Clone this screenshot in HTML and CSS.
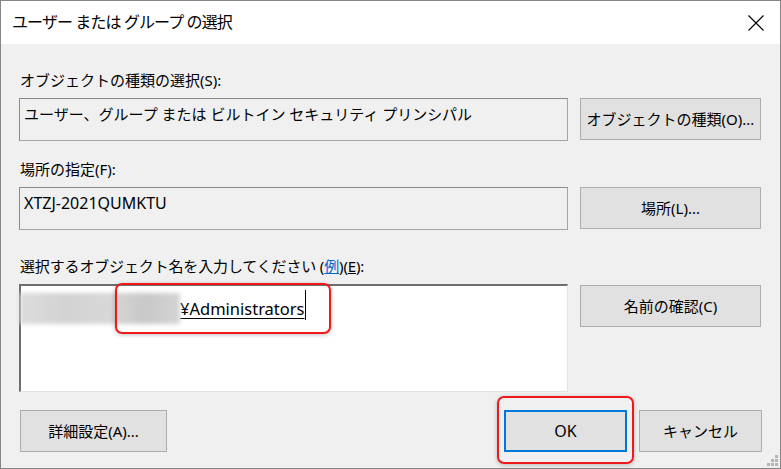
FILE: index.html
```html
<!DOCTYPE html>
<html lang="ja">
<head>
<meta charset="utf-8">
<title>ユーザー または グループ の選択</title>
<link rel="stylesheet" href="styles.css">
</head>
<body>
<div class="window">
  <div class="titlebar">
    <span class="title">ユーザー または グループ の選択</span>
    <span class="close">
      <svg width="16" height="16" viewBox="0 0 16 16"><path d="M0.5 0.5 L15.5 15.5 M15.5 0.5 L0.5 15.5" stroke="#000" stroke-width="1.1" fill="none"/></svg>
    </span>
  </div>
  <div class="content">
    <div class="label l1">オブジェクトの種類の選択(S):</div>
    <div class="row">
      <div class="field">ユーザー、グループ または ビルトイン セキュリティ プリンシパル</div>
      <div class="btn">オブジェクトの種類(O)...</div>
    </div>
    <div class="label l2">場所の指定(F):</div>
    <div class="row">
      <div class="field latin">XTZJ-2021QUMKTU</div>
      <div class="btn">場所(L)...</div>
    </div>
    <div class="label l3">選択するオブジェクト名を入力してください (<span class="link">例</span>)(<u>E</u>):</div>
    <div class="row row-top">
      <div class="textarea">
        <div class="line"><span class="redact"></span><span class="entry">¥Administrators</span><span class="caret"></span></div>
        <div class="mark mark-name"></div>
      </div>
      <div class="btn btn-short">名前の確認(C)</div>
    </div>
    <div class="bottom">
      <div class="btn btn-adv">詳細設定(A)...</div>
      <div class="actions">
        <div class="ok-wrap">
          <div class="btn btn-ok">OK</div>
          <div class="mark mark-ok"></div>
        </div>
        <div class="btn btn-cancel">キャンセル</div>
      </div>
    </div>
  </div>
  <div class="grip">
    <i></i><i></i><i></i><i></i><i></i><i></i>
  </div>
</div>
</body>
</html>
```
FILE: styles.css
```css
* { box-sizing: border-box; }
html, body { margin: 0; padding: 0; }
body {
  font-family: "Noto Sans", "Noto Sans CJK JP", sans-serif;
  font-size: 15px;
  color: #000;
  background: #f0f0f0;
}
.window {
  position: relative;
  width: 781px;
  height: 469px;
  border: 1px solid #858585;
  background: #f0f0f0;
  display: flex;
  flex-direction: column;
}
.titlebar {
  height: 43px;
  background: #fff;
  display: flex;
  align-items: center;
  justify-content: space-between;
  padding: 0 16px 0 11px;
}
.title {
  font-size: 16px;
  letter-spacing: -0.9px;
  line-height: 20px;
  padding-bottom: 1px;
}
.close {
  display: flex;
  width: 16px;
  height: 16px;
}
.content {
  display: flex;
  flex-direction: column;
  padding: 0 18px;
}
.label {
  height: 20px;
  line-height: 20px;
  padding-left: 1px;
  white-space: nowrap;
}
.l1 { margin-top: 26px; }
.l2 { margin-top: 18px; }
.l3 { margin-top: 26px; letter-spacing: -0.15px; }
.link { color: #0066cc; text-decoration: underline; }
.row {
  display: flex;
  gap: 12px;
  margin-top: 8px;
  align-items: flex-start;
}
.field {
  width: 549px;
  height: 43px;
  border: 1px solid #8a8a8a;
  border-right-color: #a5a5a5;
  border-bottom-color: #a5a5a5;
  padding: 4px 4px;
  line-height: 22px;
  white-space: nowrap;
}
.field.latin { font-size: 16px; }
.btn {
  width: 181px;
  height: 42px;
  background: #e1e1e1;
  border: 1px solid #adadad;
  display: flex;
  align-items: center;
  justify-content: center;
  white-space: nowrap;
  line-height: 20px;
  padding-bottom: 1px;
}
.row-top .btn { margin-top: 1px; }
.textarea {
  position: relative;
  width: 549px;
  height: 108px;
  background: #fff;
  border-style: solid;
  border-width: 2px 1px 1px 2px;
  border-color: #6e6e6e #e3e3e3 #e3e3e3 #6e6e6e;
}
.line {
  display: flex;
  align-items: flex-end;
  margin-top: 7px;
  height: 31px;
}
.redact {
  display: inline-block;
  width: 160px;
  height: 31px;
  margin-left: -1px;
  background: linear-gradient(90deg, #dcdcdc 0%, #d2d2d2 30%, #d8d8d8 55%, #c8c8c8 78%, #d4d4d4 100%);
  filter: blur(2px);
}
.entry {
  font-size: 16.5px;
  line-height: 22px;
  text-decoration: underline;
  text-underline-offset: 3px;
  margin-bottom: 4px;
}
.caret {
  display: inline-block;
  width: 1px;
  height: 30px;
  background: #000;
  align-self: flex-start;
  margin-top: -3px;
}
.mark {
  position: absolute;
  border: 2px solid #f01818;
  border-radius: 7px;
  box-shadow: 0 1px 4px rgba(0,0,0,0.25);
}
.mark-name {
  left: 94px;
  top: -3px;
  width: 216px;
  height: 51px;
}
.bottom {
  display: flex;
  justify-content: space-between;
  margin-top: 18px;
}
.btn-adv { width: 147px; margin-left: 1px; }
.actions { display: flex; gap: 12px; }
.ok-wrap { position: relative; }
.btn-ok {
  width: 123px;
  border: 2px solid #0078d7;
  font-size: 16px;
}
.btn-cancel { width: 123px; }
.mark-ok {
  left: -7px;
  top: -14px;
  width: 137px;
  height: 68px;
}
.grip {
  position: absolute;
  right: 2px;
  bottom: 2px;
  width: 12px;
  height: 12px;
  display: grid;
  grid-template-columns: repeat(3, 3px);
  grid-template-rows: repeat(3, 3px);
  gap: 1px;
  justify-content: end;
  align-content: end;
}
.grip i { background: #b4b4b4; display: block; }
.grip i:nth-child(1) { grid-column: 3; grid-row: 1; }
.grip i:nth-child(2) { grid-column: 2; grid-row: 2; }
.grip i:nth-child(3) { grid-column: 3; grid-row: 2; }
.grip i:nth-child(4) { grid-column: 1; grid-row: 3; }
.grip i:nth-child(5) { grid-column: 2; grid-row: 3; }
.grip i:nth-child(6) { grid-column: 3; grid-row: 3; }
```
